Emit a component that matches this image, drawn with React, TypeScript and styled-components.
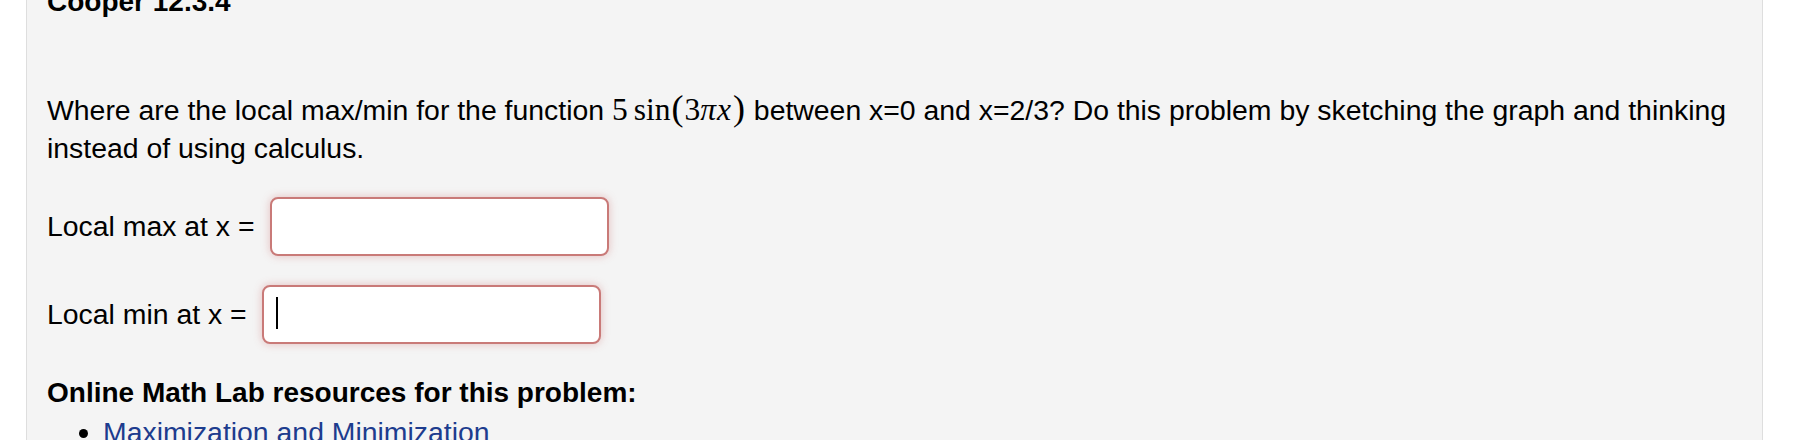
import styled, { createGlobalStyle } from 'styled-components'

const GlobalStyle = createGlobalStyle`
	body {
		margin: 0;
		background: #ffffff;
		color: #000000;
		font-family: "Liberation Sans", Helvetica, Arial, sans-serif;
		font-size: 28.4px;
	}
`

function App() {
	return (
		<>
			<GlobalStyle />
			<Page>
				<Panel>
					<Title>Cooper 12.3.4</Title>
					<Question>
						Where are the local max/min for the function{' '}
						<MathExpr>
							<Upright>5</Upright>
							<Upright className="op">sin</Upright>
							<Paren>(</Paren>
							<Upright>3</Upright>
							<Italic>π</Italic>
							<Italic>x</Italic>
							<Paren>)</Paren>
						</MathExpr>{' '}
						between x=0 and x=2/3? Do this problem by sketching the graph and
						thinking instead of using calculus.
					</Question>
					<AnswerRow $spacing={30}>
						<Label>Local max at x =</Label>
						<Field>
							<Input type="text" aria-label="Local max at x" />
						</Field>
					</AnswerRow>
					<AnswerRow $spacing={29}>
						<Label>Local min at x =</Label>
						<Field>
							<Input type="text" aria-label="Local min at x" />
							<Caret />
						</Field>
					</AnswerRow>
					<ResourcesTitle>Online Math Lab resources for this problem:</ResourcesTitle>
					<ResourceList>
						<li>
							<ResourceLink href="#">Maximization and Minimization</ResourceLink>
						</li>
					</ResourceList>
				</Panel>
			</Page>
		</>
	)
}

const Page = styled.div`
	height: 440px;
	overflow: hidden;
	padding: 0 49px 0 26px;
`

const Panel = styled.div`
	margin-top: -36px;
	padding: 20px 20px 40px 20px;
	background: #f4f4f4;
	border: 1px solid #dedede;
`

const Title = styled.h3`
	margin: 0 0 72px;
	font-size: 28px;
	line-height: 1.2;
	font-weight: 700;
`

const Question = styled.p`
	margin: 0;
	line-height: 38px;
`

const MathExpr = styled.span`
	font-family: "Liberation Serif", "Times New Roman", serif;
	font-size: 31.5px;
	line-height: 0;
	white-space: nowrap;

	.op {
		margin-left: 6px;
	}
`

const Upright = styled.span`
	font-style: normal;
`

const Italic = styled.span`
	font-style: italic;
	padding-right: 1px;
`

const Paren = styled.span`
	font-size: 36px;
	padding: 0 1px;
`

const AnswerRow = styled.div<{ $spacing: number }>`
	display: flex;
	align-items: center;
	gap: 15px;
	margin-top: ${(p) => p.$spacing}px;
`

const Label = styled.span`
	line-height: 38px;
`

const Field = styled.div`
	position: relative;
`

const Input = styled.input`
	display: block;
	box-sizing: border-box;
	width: 339px;
	height: 59px;
	padding: 0 12px;
	background: #ffffff;
	border: 2px solid #c97a78;
	border-radius: 8px;
	box-shadow: 0 0 8px rgba(200, 90, 90, 0.35);
	font-family: "Liberation Sans", Helvetica, Arial, sans-serif;
	font-size: 28px;
	outline: none;
`

const Caret = styled.span`
	position: absolute;
	left: 14px;
	top: 12px;
	width: 2px;
	height: 32px;
	background: #000000;
`

const ResourcesTitle = styled.p`
	margin: 30px 0 0;
	font-size: 28px;
	font-weight: 700;
	line-height: 38px;
`

const ResourceList = styled.ul`
	margin: 1px 0 0;
	padding-left: 56px;
	line-height: 38px;
`

const ResourceLink = styled.a`
	color: #1d3c8e;
	text-decoration: none;
`

export default App
